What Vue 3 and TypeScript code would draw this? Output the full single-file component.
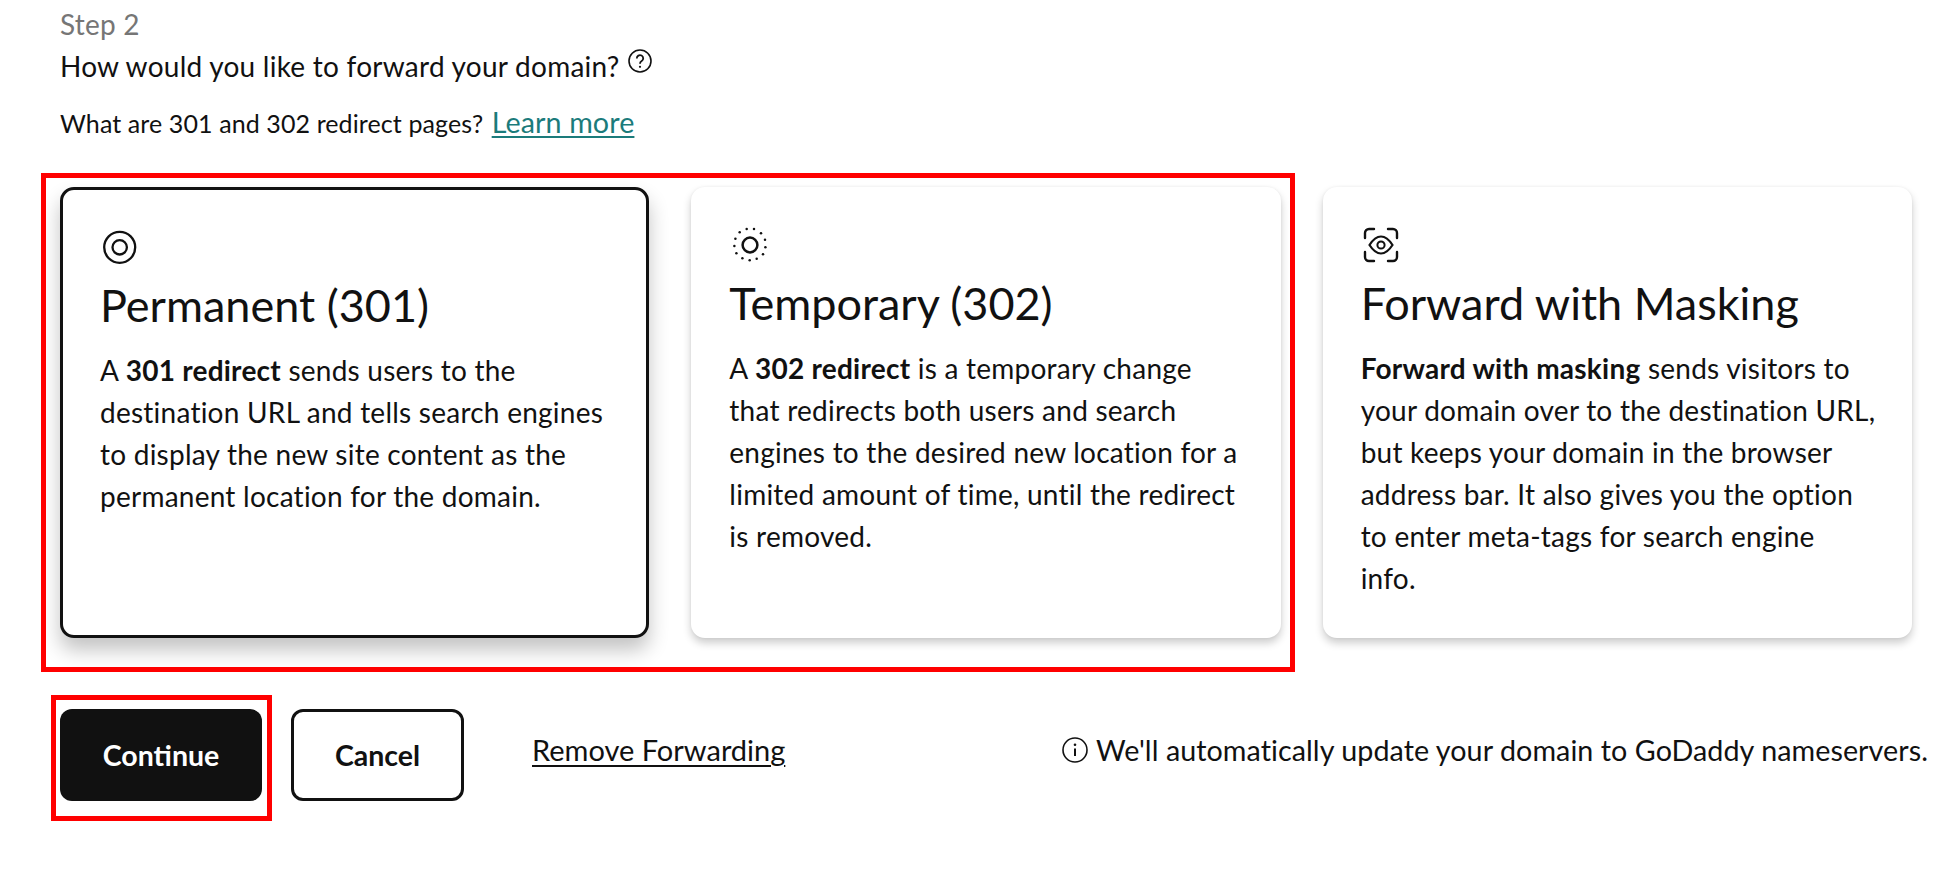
<script setup lang="ts">
interface Option {
  key: string;
  title: string;
  lead: string;
  strong: string;
  rest: string;
  selected?: boolean;
}

const options: Option[] = [
  {
    key: "permanent",
    title: "Permanent (301)",
    lead: "A ",
    strong: "301 redirect",
    rest: " sends users to the destination URL and tells search engines to display the new site content as the permanent location for the domain.",
    selected: true,
  },
  {
    key: "temporary",
    title: "Temporary (302)",
    lead: "A ",
    strong: "302 redirect",
    rest: " is a temporary change that redirects both users and search engines to the desired new location for a limited amount of time, until the redirect is removed.",
  },
  {
    key: "masking",
    title: "Forward with Masking",
    lead: "",
    strong: "Forward with masking",
    rest: " sends visitors to your domain over to the destination URL, but keeps your domain in the browser address bar. It also gives you the option to enter meta-tags for search engine\ninfo.",
  },
];

// dotted ring of the temporary icon
const dots: [number, number][] = [
  [15.7, 2], [23, 2], [30, 6.3], [34, 12.7], [34.4, 20.3], [32, 27.3], [25.7, 31.7],
  [18.7, 33.3], [11.4, 31.3], [5.4, 26.3], [3.4, 19], [4.4, 11.7], [8.7, 5.3],
];
</script>

<template>
  <div class="page">
    <div class="step">Step 2</div>
    <div class="question">
      <span>How would you like to forward your domain?</span>
      <svg class="help" width="24" height="24" viewBox="0 0 24 24" fill="none" stroke="#111" stroke-width="1.6">
        <circle cx="12" cy="12" r="11" />
        <path d="M8.8 9.4a3.2 3.2 0 1 1 4.9 2.7c-1.1.7-1.7 1.3-1.7 2.6" stroke-width="1.8" />
        <circle cx="12" cy="17.8" r="1.1" fill="#111" stroke="none" />
      </svg>
    </div>
    <div class="hint">
      What are 301 and 302 redirect pages?
      <a class="learn" href="#">Learn more</a>
    </div>

    <div class="cards">
      <div v-for="opt in options" :key="opt.key" class="card" :class="{ selected: opt.selected }">
        <svg class="card-icon" width="40" height="40" viewBox="0 0 40 40" fill="none" stroke="#111">
          <template v-if="opt.key === 'permanent'">
            <circle cx="19.7" cy="20.3" r="15.5" stroke-width="2.3" />
            <circle cx="19.7" cy="20.3" r="7.2" stroke-width="2.3" />
          </template>
          <g v-else-if="opt.key === 'temporary'" transform="translate(2 2)">
            <circle cx="19" cy="18" r="7.4" stroke-width="2.5" />
            <circle v-for="(d, i) in dots" :key="i" :cx="d[0]" :cy="d[1]" r="1.25" fill="#111" stroke="none" />
          </g>
          <g v-else transform="translate(2 2)">
            <path
              d="M2 11V6a4 4 0 0 1 4-4h5M25 2h5a4 4 0 0 1 4 4v5M34 25v5a4 4 0 0 1-4 4h-5M11 34H6a4 4 0 0 1-4-4v-5"
              stroke-width="2.4"
              stroke-linecap="round"
            />
            <path d="M6.5 18C10 12.5 14 9.5 18 9.5S26 12.5 29.5 18C26 23.5 22 26.5 18 26.5S10 23.5 6.5 18Z" stroke-width="2.2" />
            <circle cx="18" cy="18" r="3.6" stroke-width="2" />
          </g>
        </svg>
        <h3 class="card-title">{{ opt.title }}</h3>
        <p class="card-text">{{ opt.lead }}<strong>{{ opt.strong }}</strong>{{ opt.rest }}</p>
      </div>
    </div>

    <div class="actions">
      <button class="btn primary">Continue</button>
      <button class="btn outline">Cancel</button>
      <a class="remove" href="#">Remove Forwarding</a>
      <div class="note">
        <svg width="26" height="26" viewBox="0 0 26 26" fill="none" stroke="#111" stroke-width="1.6">
          <circle cx="13" cy="13" r="12" />
          <path d="M13 11.5V19" stroke-width="2" />
          <circle cx="13" cy="7.8" r="1.3" fill="#111" stroke="none" />
        </svg>
        <span>We'll automatically update your domain to GoDaddy nameservers.</span>
      </div>
    </div>

    <!-- red annotation frames drawn over the screenshot -->
    <div class="mark mark-cards"></div>
    <div class="mark mark-continue"></div>
  </div>
</template>

<style scoped>
.page {
  position: relative;
  box-sizing: border-box;
  width: 1959px;
  height: 873px;
  padding: 7px 47px 0 60px;
  overflow: hidden;
  background: #fff;
  color: #111;
  font-family: Lato, "Open Sans", sans-serif;
}

.step {
  font-size: 28px;
  letter-spacing: 0.2px;
  line-height: 34px;
  color: #767676;
}

.question {
  display: flex;
  align-items: flex-start;
  gap: 8px;
  margin-top: 7px;
  font-size: 28px;
  letter-spacing: 0.25px;
  line-height: 36px;
}

.help {
  margin-top: 1px;
}

.hint {
  margin-top: 20px;
  font-size: 25px;
  letter-spacing: 0.1px;
  line-height: 36px;
}

.learn {
  margin-left: 2px;
  font-size: 28.7px;
  color: #1b7b7b;
  text-underline-offset: 3px;
}

.cards {
  display: grid;
  grid-template-columns: repeat(3, 1fr);
  gap: 42px;
  margin-top: 46px;
}

.card {
  box-sizing: border-box;
  height: 451px;
  padding: 38px 32px 38px 38px;
  border-radius: 14px;
  background: #fff;
  box-shadow: 0 5px 9px rgba(0, 0, 0, 0.2), 0 0 3px rgba(0, 0, 0, 0.06);
}

.card.selected {
  padding: 37px 29px 37px 37px;
  border: 3px solid #111;
  box-shadow: 0 12px 20px rgba(0, 0, 0, 0.24);
}

.card-icon {
  display: block;
}

.card-title {
  margin: 10px 0 0;
  font-size: 45px;
  font-weight: 400;
  line-height: 56px;
}

.card-text {
  margin: 16px 0 0;
  font-size: 28px;
  letter-spacing: 0.24px;
  line-height: 42px;
  white-space: pre-line;
}

.card-text strong {
  font-weight: 700;
}

.actions {
  display: flex;
  align-items: stretch;
  margin-top: 71px;
  margin-right: -16px;
}

.btn {
  box-sizing: border-box;
  height: 92px;
  border-radius: 12px;
  font-family: inherit;
  font-size: 28.5px;
  font-weight: 700;
}

.primary {
  width: 202px;
  border: none;
  background: #111;
  color: #fff;
}

.outline {
  width: 173px;
  margin-left: 29px;
  border: 3px solid #111;
  background: #fff;
  color: #111;
}

.remove {
  align-self: center;
  margin-left: 68px;
  margin-bottom: 11px;
  font-size: 29px;
  color: #111;
  text-underline-offset: 4px;
}

.note {
  display: flex;
  align-items: center;
  gap: 8px;
  align-self: center;
  margin-left: auto;
  margin-bottom: 11px;
  font-size: 28.7px;
  letter-spacing: 0.06px;
}

.note svg {
  flex: none;
}

.mark {
  position: absolute;
  box-sizing: border-box;
  border: 5px solid #f00;
  pointer-events: none;
}

.mark-cards {
  left: 41px;
  top: 173px;
  width: 1254px;
  height: 499px;
}

.mark-continue {
  left: 51px;
  top: 695px;
  width: 221px;
  height: 126px;
}
</style>
